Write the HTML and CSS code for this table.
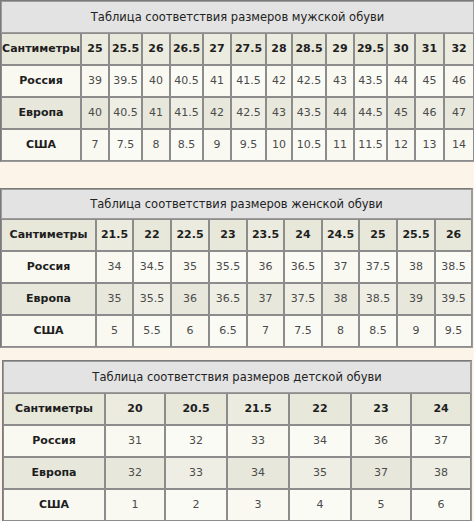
FILE: index.html
```html
<!DOCTYPE html>
<html lang="ru">
<head>
<meta charset="utf-8">
<title>Таблицы размеров обуви</title>
<link rel="stylesheet" href="styles.css">
</head>
<body>
<div class="page">
  <table class="sizes t-men">
    <colgroup>
      <col class="w80"><col class="w28"><col class="w33"><col class="w28"><col class="w33"><col class="w28"><col class="w35"><col class="w26"><col class="w34"><col class="w28"><col class="w33"><col class="w28"><col class="w29"><col class="w30">
    </colgroup>
    <tr class="title"><td colspan="14">Таблица соответствия размеров мужской обуви</td></tr>
    <tr class="head"><th>Сантиметры</th><th>25</th><th>25.5</th><th>26</th><th>26.5</th><th>27</th><th>27.5</th><th>28</th><th>28.5</th><th>29</th><th>29.5</th><th>30</th><th>31</th><th>32</th></tr>
    <tr class="light"><th>Россия</th><td>39</td><td>39.5</td><td>40</td><td>40.5</td><td>41</td><td>41.5</td><td>42</td><td>42.5</td><td>43</td><td>43.5</td><td>44</td><td>45</td><td>46</td></tr>
    <tr class="dark"><th>Европа</th><td>40</td><td>40.5</td><td>41</td><td>41.5</td><td>42</td><td>42.5</td><td>43</td><td>43.5</td><td>44</td><td>44.5</td><td>45</td><td>46</td><td>47</td></tr>
    <tr class="light"><th>США</th><td>7</td><td>7.5</td><td>8</td><td>8.5</td><td>9</td><td>9.5</td><td>10</td><td>10.5</td><td>11</td><td>11.5</td><td>12</td><td>13</td><td>14</td></tr>
  </table>

  <table class="sizes t-women">
    <colgroup>
      <col class="w95"><col class="w37"><col class="w38"><col class="w38"><col class="w38"><col class="w37"><col class="w38"><col class="w37"><col class="w38"><col class="w38"><col class="w37">
    </colgroup>
    <tr class="title"><td colspan="11">Таблица соответствия размеров женской обуви</td></tr>
    <tr class="head"><th>Сантиметры</th><th>21.5</th><th>22</th><th>22.5</th><th>23</th><th>23.5</th><th>24</th><th>24.5</th><th>25</th><th>25.5</th><th>26</th></tr>
    <tr class="light"><th>Россия</th><td>34</td><td>34.5</td><td>35</td><td>35.5</td><td>36</td><td>36.5</td><td>37</td><td>37.5</td><td>38</td><td>38.5</td></tr>
    <tr class="dark"><th>Европа</th><td>35</td><td>35.5</td><td>36</td><td>36.5</td><td>37</td><td>37.5</td><td>38</td><td>38.5</td><td>39</td><td>39.5</td></tr>
    <tr class="light"><th>США</th><td>5</td><td>5.5</td><td>6</td><td>6.5</td><td>7</td><td>7.5</td><td>8</td><td>8.5</td><td>9</td><td>9.5</td></tr>
  </table>

  <table class="sizes t-kids">
    <colgroup>
      <col class="w102"><col class="w60"><col class="w62"><col class="w62"><col class="w62"><col class="w60"><col class="w60">
    </colgroup>
    <tr class="title"><td colspan="7">Таблица соответствия размеров детской обуви</td></tr>
    <tr class="head"><th>Сантиметры</th><th>20</th><th>20.5</th><th>21.5</th><th>22</th><th>23</th><th>24</th></tr>
    <tr class="light"><th>Россия</th><td>31</td><td>32</td><td>33</td><td>34</td><td>36</td><td>37</td></tr>
    <tr class="dark"><th>Европа</th><td>32</td><td>33</td><td>34</td><td>35</td><td>37</td><td>38</td></tr>
    <tr class="light"><th>США</th><td>1</td><td>2</td><td>3</td><td>4</td><td>5</td><td>6</td></tr>
  </table>
</div>
</body>
</html>
```

FILE: styles.css
```css
html, body {
  margin: 0;
  padding: 0;
  background: #fcf4e8;
}

.page {
  display: flex;
  flex-direction: column;
  align-items: flex-start;
  font-family: "DejaVu Sans", Verdana, sans-serif;
}

.sizes {
  table-layout: fixed;
  border-collapse: separate;
  border-spacing: 0;
  border: 1px solid #7a7a7a;
  border-right-color: #9a9a9a;
  border-bottom-color: #9a9a9a;
}

.t-men { width: 474px; }
.t-women { width: 472px; margin-top: 26px; }
.t-kids { width: 470px; margin-top: 12px; margin-left: 2px; }

.sizes td,
.sizes th {
  padding: 0;
  border: 1px solid #8c8c8c;
  text-align: center;
  vertical-align: middle;
  line-height: 30px;
  white-space: nowrap;
  overflow: hidden;
}

.sizes td {
  font-size: 11px;
  color: #4b4b4b;
}

.sizes th {
  font-size: 11px;
  font-weight: bold;
  color: #1e1e1e;
}

.title td {
  background: #e3e3e3;
  color: #222222;
  font-size: 11.5px;
  border-color: #9c9c9c;
}

.t-women .title td { line-height: 28px; }

.head th { background: #e7e7da; }
.head th:nth-child(even) { background: #ebebdf; }

.light th,
.light td { background: #f9f9f2; }
.light td:nth-child(odd) { background: #fbfbf6; }

.dark th,
.dark td { background: #e7e7db; }
.dark td:nth-child(odd) { background: #eeeee4; }

.w26 { width: 26px; } .w28 { width: 28px; } .w29 { width: 29px; }
.w30 { width: 30px; } .w33 { width: 33px; } .w34 { width: 34px; }
.w35 { width: 35px; } .w37 { width: 37px; } .w38 { width: 38px; }
.w60 { width: 60px; } .w62 { width: 62px; } .w80 { width: 80px; }
.w95 { width: 95px; } .w102 { width: 102px; }
```
